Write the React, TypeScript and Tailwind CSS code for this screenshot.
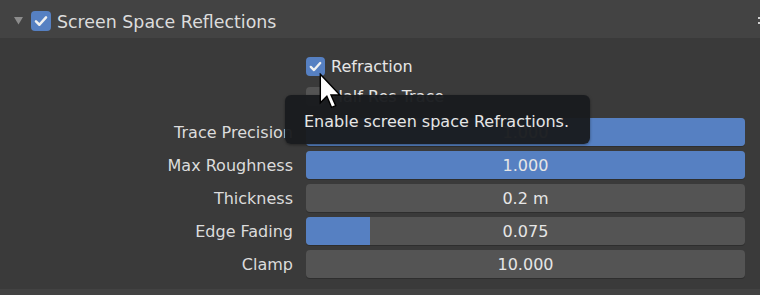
import React from "react";

const font = { fontFamily: '"DejaVu Sans", "Liberation Sans", sans-serif' };

function Check({ on, size = 20 }: { on: boolean; size?: number }) {
  return (
    <div
      className={`flex items-center justify-center rounded-[4px] shrink-0 ${on ? "bg-[#5680c2]" : "bg-[#545454]"}`}
      style={{ width: size, height: size }}
    >
      {on && (
        <svg width={size - 4} height={size - 4} viewBox="0 0 14 14">
          <path d="M2.6 7.4 L5.6 10.3 L11.4 3.8" fill="none" stroke="#f0f0f0" strokeWidth="2.2" strokeLinecap="round" strokeLinejoin="round" />
        </svg>
      )}
    </div>
  );
}

function Slider({ value, fill }: { value: string; fill: number }) {
  return (
    <div className="relative h-[28px] rounded-[4px] bg-[#545454] overflow-hidden shadow-[0_1px_0_#2e2e2e] flex items-center justify-center">
      <div className="absolute left-0 top-0 bottom-0 bg-[#5680c2]" style={{ width: `${fill}%` }} />
      <span className="relative text-[16px] text-[#e6e6e6] translate-y-[1px]">{value}</span>
    </div>
  );
}

const rows = [
  { label: "Trace Precision", value: "1.000", fill: 100 },
  { label: "Max Roughness", value: "1.000", fill: 100 },
  { label: "Thickness", value: "0.2 m", fill: 0 },
  { label: "Edge Fading", value: "0.075", fill: 14.6 },
  { label: "Clamp", value: "10.000", fill: 0 },
];

export default function App() {
  return (
    <div className="relative w-[760px] h-[295px] overflow-hidden bg-[#3a3a3a] text-[#dcdcdc]" style={font}>
      {/* header */}
      <div className="relative h-[38px] bg-[#434343] flex items-center pl-[14px] pt-[4px]">
        <svg width="9" height="8" viewBox="0 0 9 8" className="mr-[8px]">
          <path d="M0 0 L9 0 L4.5 7.5 Z" fill="#8c8c8c" />
        </svg>
        <Check on size={20} />
        <span className="ml-[6px] text-[17.4px] text-[#dcdcdc] translate-y-[1px]">Screen Space Reflections</span>
        <div className="absolute right-0 top-[17px] flex flex-col gap-[3px]">
          <div className="w-[2px] h-[2px] bg-[#d0d0d0]" />
          <div className="w-[2px] h-[2px] bg-[#d0d0d0]" />
        </div>
      </div>

      {/* body */}
      <div className="pt-[14px] pr-[15px]">
        <div className="grid grid-cols-[293px_1fr] gap-x-[13px]">
          <div />
          <div className="h-[28px] flex items-center">
            <Check on size={19} />
            <span className="ml-[6px] text-[16px] text-[#e6e6e6] translate-y-[1px]">Refraction</span>
          </div>
          <div />
          <div className="h-[28px] mt-[2px] flex items-center">
            <Check on={false} size={19} />
            <span className="ml-[6px] text-[16px] text-[#e6e6e6] translate-y-[1px]">Half Res Trace</span>
          </div>
        </div>
        <div className="mt-[8px] grid grid-cols-[293px_1fr] gap-x-[13px] gap-y-[5px]">
          {rows.map((r) => (
            <React.Fragment key={r.label}>
              <div className="h-[28px] flex items-center justify-end text-[16px] text-[#dcdcdc]">
                <span className="translate-y-[1px]">{r.label}</span>
              </div>
              <Slider value={r.value} fill={r.fill} />
            </React.Fragment>
          ))}
        </div>
      </div>

      {/* bottom strip */}
      <div className="absolute left-0 right-0 bottom-0 h-[6px] bg-[#424242]" />

      {/* tooltip */}
      <div className="absolute left-[285px] top-[95px] w-[305px] h-[49px] rounded-[6px] bg-[#191b1e]/[0.96] shadow-[0_1px_3px_rgba(0,0,0,0.4)] flex items-center pl-[19px]">
        <span className="text-[16px] text-[#e6e6e6] translate-y-[2px]">Enable screen space Refractions.</span>
      </div>

      {/* cursor */}
      <svg className="absolute left-[319px] top-[73px]" width="24" height="38" viewBox="0 0 20 32">
        <path d="M1 1 L1 25 L6.5 19.5 L10.5 29 L14 27.5 L10 18.5 L17.5 18.5 Z" fill="#ffffff" stroke="#000000" strokeWidth="1.2" strokeLinejoin="miter" />
      </svg>
    </div>
  );
}
